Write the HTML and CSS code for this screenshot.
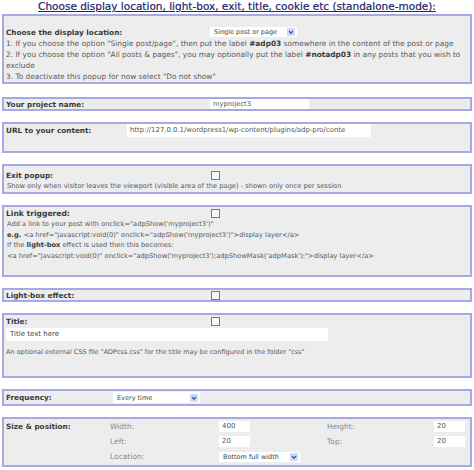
FILE: index.html
```html
<!DOCTYPE html>
<html>
<head>
<meta charset="utf-8">
<link rel="stylesheet" href="styles.css">
</head>
<body>
<h1 class="title">Choose display location, light-box, exit, title, cookie etc (standalone-mode):</h1>
<div class="page">
  <div class="panel p-loc">
    <div class="row"><span class="lbl">Choose the display location:</span><span class="select sel-loc"><span class="sel-text">Single post or page</span><span class="sel-btn"><svg width="8" height="8" viewBox="0 0 8 8"><path d="M2 3 L4 5.2 L6 3" fill="none" stroke="#3a5cc0" stroke-width="1.3"/></svg></span></span></div>
    <div class="lines big">
      <div>1. If you choose the option "Single post/page", then put the label <b>#adp03</b> somewhere in the content of the post or page</div>
      <div>2. If you choose the option "All posts &amp; pages", you may optionally put the label <b>#notadp03</b> in any posts that you wish to</div>
      <div>exclude</div>
      <div>3. To deactivate this popup for now select "Do not show"</div>
    </div>
  </div>

  <div class="panel p-name">
    <div class="row"><span class="lbl">Your project name:</span><span class="field f-name">myproject3</span></div>
  </div>

  <div class="panel p-url">
    <div class="row"><span class="lbl lbl-url">URL to your content:</span><span class="field f-url">http://127.0.0.1/wordpress1/wp-content/plugins/adp-pro/conte</span></div>
  </div>

  <div class="panel p-exit">
    <div class="row"><span class="lbl">Exit popup:</span><span class="check"></span></div>
    <div class="lines"><div>Show only when visitor leaves the viewport (visible area of the page) - shown only once per session</div></div>
  </div>

  <div class="panel p-link">
    <div class="row"><span class="lbl lbl-big">Link triggered:</span><span class="check"></span></div>
    <div class="lines code">
      <div>Add a link to your post with onclick="adpShow('myproject3')"</div>
      <div><b>e.g.</b> &lt;a href="javascript:void(0)" onclick="adpShow('myproject3')"&gt;display layer&lt;/a&gt;</div>
      <div>If the <b>light-box</b> effect is used then this becomes:</div>
      <div>&lt;a href="javascript:void(0)" onclick="adpShow('myproject3');adpShowMask('adpMask');"&gt;display layer&lt;/a&gt;</div>
    </div>
  </div>

  <div class="panel p-lightbox">
    <div class="row"><span class="lbl">Light-box effect:</span><span class="check"></span></div>
  </div>

  <div class="panel p-title">
    <div class="row"><span class="lbl">Title:</span><span class="check"></span></div>
    <div class="field f-title">Title text here</div>
    <div class="lines note"><div>An optional external CSS file "ADPcss.css" for the title may be configured in the folder "css"</div></div>
  </div>

  <div class="panel p-freq">
    <div class="row"><span class="lbl lbl-freq">Frequency:</span><span class="select sel-freq"><span class="sel-text">Every time</span><span class="sel-btn"><svg width="8" height="8" viewBox="0 0 8 8"><path d="M2 3 L4 5.2 L6 3" fill="none" stroke="#3a5cc0" stroke-width="1.3"/></svg></span></span></div>
  </div>

  <div class="panel p-size">
    <div class="grid">
      <span class="lbl">Size &amp; position:</span>
      <span class="sub">Width:</span>
      <span class="field f-num">400</span>
      <span class="sub">Height:</span>
      <span class="field f-num">20</span>

      <span></span>
      <span class="sub">Left:</span>
      <span class="field f-num">20</span>
      <span class="sub">Top:</span>
      <span class="field f-num">20</span>

      <span></span>
      <span class="sub">Location:</span>
      <span class="select sel-where"><span class="sel-text">Bottom full width</span><span class="sel-btn"><svg width="8" height="8" viewBox="0 0 8 8"><path d="M2 3 L4 5.2 L6 3" fill="none" stroke="#3a5cc0" stroke-width="1.3"/></svg></span></span>
      <span></span>
      <span></span>
    </div>
  </div>
</div>
</body>
</html>
```

FILE: styles.css
```css
html, body {
  margin: 0;
  padding: 0;
  background: #ffffff;
}
body {
  font-family: "DejaVu Sans", Verdana, sans-serif;
  font-size: 6.7px;
  color: #5a5a5a;
}
.title {
  margin: 0;
  height: 13px;
  line-height: 12px;
  font-size: 10.5px;
  font-weight: normal;
  text-align: center;
  color: #25256f;
  text-decoration: underline;
  white-space: nowrap;
  -webkit-text-stroke: 0.2px #25256f;
}
.page {
  display: flex;
  flex-direction: column;
  gap: 11px;
  padding: 1px 2px 0;
}
.panel {
  background: #ededed;
  border: 2px solid #a8a8e4;
  padding: 0 2px;
  box-sizing: border-box;
}
.row {
  display: flex;
  align-items: center;
  height: 12px;
}
.lbl {
  flex: none;
  width: 204px;
  font-weight: bold;
  font-size: 7.3px;
  color: #3a3a3a;
  white-space: nowrap;
}
.lbl-big {
  font-size: 7.6px;
  font-weight: 600;
}
.lbl-freq {
  width: 107px;
}
.lbl-url {
  width: 121px;
}
.lines {
  line-height: 11px;
  white-space: nowrap;
}
.lines.big {
  font-size: 7.4px;
}
.lines b {
  color: #3a3a3a;
}
.code {
  line-height: 10.5px;
  padding-left: 1px;
}
.check {
  display: inline-block;
  width: 7px;
  height: 7px;
  border: 1px solid #7a7a7a;
  background: #f7f7f7;
  margin-left: 1px;
}
.field {
  display: block;
  background: #ffffff;
  color: #555;
  padding: 0 3px;
  box-sizing: border-box;
  white-space: nowrap;
  overflow: hidden;
}
.select {
  display: flex;
  align-items: center;
  justify-content: space-between;
  background: #ffffff;
  height: 10px;
  padding: 0 2px 0 4px;
  box-sizing: border-box;
  font-size: 6.5px;
  color: #444;
}
.sel-btn {
  display: flex;
  align-items: center;
  justify-content: center;
  width: 8px;
  height: 8px;
  background: #cfdaf6;
  border-radius: 1px;
}
.sel-btn svg {
  display: block;
}

/* box 1 */
.p-loc {
  padding-top: 10px;
  height: 70px;
  margin-bottom: 2px;
}
.sel-loc {
  width: 87px;
}

/* project name */
.p-name {
  height: 14px;
}
.p-name .row {
  height: 10px;
}
.f-name {
  width: 99px;
  height: 10px;
  line-height: 10px;
}

/* url */
.p-url {
  height: 31px;
}
.p-url .row {
  align-items: flex-start;
  height: 13px;
  line-height: 13px;
}
.f-url {
  width: 244px;
  height: 13px;
  line-height: 13px;
  font-size: 6.9px;
}

/* exit */
.p-exit {
  padding-top: 3px;
  height: 30px;
}
.p-exit .lines {
  padding-left: 1px;
}

/* link */
.p-link {
  height: 72px;
}

/* lightbox */
.p-lightbox {
  height: 14px;
}
.p-lightbox .row {
  height: 10px;
}

/* title */
.p-title {
  height: 65px;
}
.f-title {
  width: 322px;
  height: 13px;
  line-height: 13px;
  margin-top: 1px;
  font-size: 7px;
  color: #444;
  padding-left: 4px;
}
.note {
  margin-top: 6px;
  font-size: 6.5px;
}

/* frequency */
.p-freq {
  height: 17px;
}
.p-freq .row {
  height: 13px;
}
.sel-freq {
  width: 87px;
  height: 11px;
}

/* size */
.p-size {
  height: 50px;
}
.grid {
  display: grid;
  grid-template-columns: 104px 109px 108px 107px 31px;
  grid-auto-rows: 15px;
  align-items: center;
}
.sub {
  color: #8a8a8a;
  font-size: 7.5px;
}
.f-num {
  width: 31px;
  height: 11px;
  line-height: 11px;
  font-size: 7px;
}
.sel-where {
  width: 81px;
}
```
